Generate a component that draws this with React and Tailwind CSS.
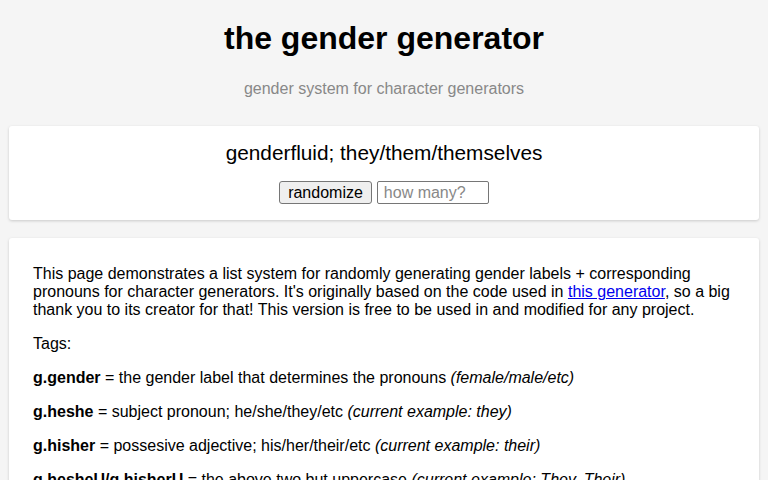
import React from 'react';

const tags = [
  { tag: 'g.gender', desc: 'the gender label that determines the pronouns', note: '(female/male/etc)' },
  { tag: 'g.heshe', desc: 'subject pronoun; he/she/they/etc', note: '(current example: they)' },
  { tag: 'g.hisher', desc: 'possesive adjective; his/her/their/etc', note: '(current example: their)' },
  { tag: 'g.hesheU/g.hisherU', desc: 'the above two but uppercase', note: '(current example: They, Their)' },
];

export default function App() {
  return (
    <div className="min-h-screen bg-[#f5f5f5] px-[9px] pt-5 text-black font-['Liberation_Sans',Arial,sans-serif]">
      <h1 className="text-center text-[32px] font-bold leading-[37px]">the gender generator</h1>
      <p className="mt-[23px] text-center text-base leading-[18px] text-[#888888]">gender system for character generators</p>

      <div className="mt-[28px] rounded-[3px] bg-white px-6 pt-[15px] pb-4 shadow-[0_1px_3px_rgba(0,0,0,0.18)]">
        <div className="text-center text-[20.8px] leading-[24px]">genderfluid; they/them/themselves</div>
        <div className="mt-4 flex justify-center gap-[5px]">
          <button className="h-[23px] rounded-[3px] border border-[#767676] bg-[#efefef] px-2 text-base leading-[18px] text-black">
            randomize
          </button>
          <input
            className="h-[23px] w-[112px] rounded-[2px] border border-[#767676] bg-white px-[6px] text-base leading-[18px] placeholder:text-[#888888]"
            placeholder="how many?"
          />
        </div>
      </div>

      <div className="mt-[18px] rounded-[3px] bg-white px-6 pt-[27px] pb-6 text-base leading-[18px] shadow-[0_1px_3px_rgba(0,0,0,0.18)]">
        <p>
          This page demonstrates a list system for randomly generating gender labels + corresponding pronouns for
          character generators. It's originally based on the code used in{' '}
          <a href="#" className="text-[#0000ee] underline">this generator</a>, so a big thank you to its creator for
          that! This version is free to be used in and modified for any project.
        </p>
        <p className="mt-4">Tags:</p>
        {tags.map((t) => (
          <p key={t.tag} className="mt-4">
            <b>{t.tag}</b> = {t.desc} <i>{t.note}</i>
          </p>
        ))}
      </div>
    </div>
  );
}
